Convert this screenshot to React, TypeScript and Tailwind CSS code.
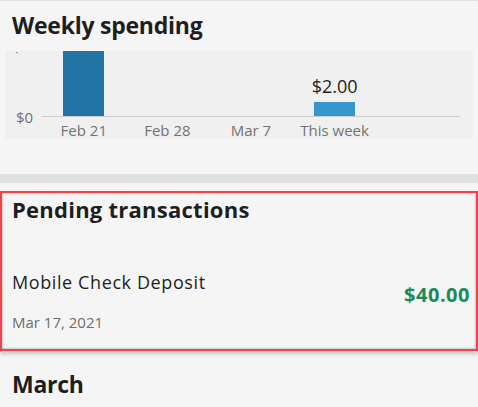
import React from 'react'

const weeks = [
  { label: 'Feb 21', height: 65, color: 'bg-[#2274a5]', amount: '' },
  { label: 'Feb 28', height: 0, color: '', amount: '' },
  { label: 'Mar 7', height: 0, color: '', amount: '' },
  { label: 'This week', height: 14, color: 'bg-[#3597cc]', amount: '$2.00' },
  { label: '', height: 0, color: '', amount: '' }
]

const App: React.FC = () => {
  return (
    <div className="w-[478px] h-[407px] overflow-hidden bg-[#f5f5f5] font-['Open_Sans',sans-serif] text-[#1e1e1e]">
      <div className="border-t border-[#e3e3e3]" />

      {/* Weekly spending */}
      <section className="pt-[10px]">
        <h2 className="px-3 text-[23px] font-bold leading-[29px] tracking-[-0.25px]">Weekly spending</h2>

        <div className="mx-[5px] mt-[11px] h-[88px] bg-[#f0f0f0] flex">
          <div className="w-[37px] flex flex-col justify-between pl-[11px]">
            <span className="block w-[2px] h-[1px] mt-[1px] bg-[#9a9a9a]" />
            <span className="text-[15px] leading-[16px] text-[#707070] mb-[14px]">$0</span>
          </div>
          <div className="flex-1 mr-[13px] flex flex-col">
            <div className="h-[66px] grid grid-cols-5 items-end border-b border-[#cccccc]">
              {weeks.map((w, i) => (
                <div key={i} className="flex flex-col items-center">
                  {w.amount && (
                    <span className="text-[18px] leading-[20px] mb-[6px] text-[#1e1e1e]">{w.amount}</span>
                  )}
                  {w.height > 0 && (
                    <div className={`w-[41px] ${w.color}`} style={{ height: w.height }} />
                  )}
                </div>
              ))}
            </div>
            <div className="grid grid-cols-5 pt-[5px]">
              {weeks.map((w, i) => (
                <span key={i} className="text-center text-[15px] leading-[16px] text-[#737373]">
                  {w.label}
                </span>
              ))}
            </div>
          </div>
        </div>
      </section>

      <div className="mt-[35px] h-[9px] bg-[#e1e1e1]" />

      {/* Pending transactions */}
      <section className="mt-[8px] h-[160px] border-2 border-[#ef444a] shadow-[inset_0_0_3px_rgba(0,0,0,0.35),0_3px_4px_rgba(0,0,0,0.2)] pl-[10px] pr-[6px] flex flex-col">
        <h2 className="pt-[2px] text-[22px] font-bold leading-[28px] tracking-[0.25px]">Pending transactions</h2>
        <div className="mt-[48px] flex items-center justify-between">
          <div className="flex flex-col">
            <span className="text-[18px] leading-[22px] tracking-[0.6px]">Mobile Check Deposit</span>
            <span className="mt-[20px] text-[15px] leading-[18px] text-[#6e6e6e]">Mar 17, 2021</span>
          </div>
          <span className="mb-[12px] text-[20px] font-bold leading-[24px] tracking-[0.5px] text-[#1b8a5a]">$40.00</span>
        </div>
      </section>

      <h2 className="px-3 pt-[19px] text-[23px] font-bold leading-[29px] tracking-[-0.25px]">March</h2>
    </div>
  )
}

export default App
